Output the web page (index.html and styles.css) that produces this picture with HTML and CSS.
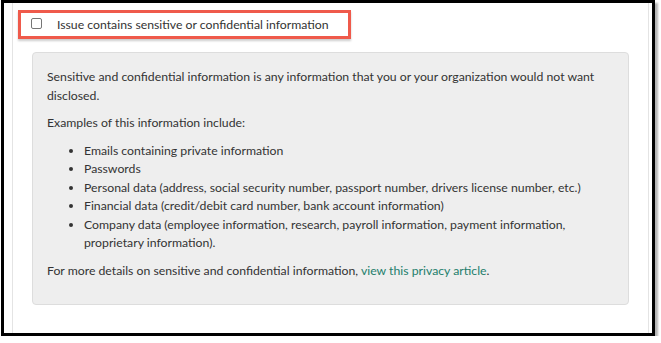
FILE: index.html
```html
<!DOCTYPE html>
<html lang="en">
<head>
<meta charset="utf-8">
<title>Sensitive information</title>
<link rel="stylesheet" href="styles.css">
</head>
<body>
<div class="frame">
  <div class="sheet">
    <label class="check-row">
      <span class="checkbox"></span>
      <span class="check-label">Issue contains sensitive or confidential information</span>
    </label>
    <div class="info-panel">
      <p>Sensitive and confidential information is any information that you or your organization would not want disclosed.</p>
      <p>Examples of this information include:</p>
      <ul>
        <li>Emails containing private information</li>
        <li>Passwords</li>
        <li>Personal data (address, social security number, passport number, drivers license number, etc.)</li>
        <li>Financial data (credit/debit card number, bank account information)</li>
        <li>Company data (employee information, research, payroll information, payment information, proprietary information).</li>
      </ul>
      <p>For more details on sensitive and confidential information, <a href="#">view this privacy article</a>.</p>
    </div>
  </div>
</div>
</body>
</html>
```
FILE: styles.css
```css
html, body {
  margin: 0;
  padding: 0;
  background: #ffffff;
}
body {
  font-family: Lato, "Noto Sans", sans-serif;
  font-size: 12.25px;
  color: #333333;
}
.frame {
  margin-left: 1px;
  width: 648px;
  height: 330px;
  border: 3px solid #000000;
  background: #ffffff;
  box-shadow: 3px 3px 2px rgba(0, 0, 0, 0.3);
  display: flex;
}
.sheet {
  flex: 1;
  margin: 0 3px 0 8px;
  border-left: 1px solid #e4e4e4;
  border-right: 1px solid #e4e4e4;
  padding-top: 7px;
}
.check-row {
  display: flex;
  align-items: center;
  box-sizing: border-box;
  width: 333px;
  height: 29px;
  margin-left: 5px;
  padding-left: 10px;
  border: 3px solid #ef5a4b;
  box-shadow: 0 2px 2px rgba(0, 0, 0, 0.2);
}
.checkbox {
  box-sizing: border-box;
  width: 11px;
  height: 11px;
  border: 1px solid #767676;
  border-radius: 2px;
  background: #ffffff;
  margin-top: -2px;
}
.check-label {
  margin-left: 15px;
  line-height: 18px;
}
.info-panel {
  margin: 13px 19px 0 19px;
  padding: 15px 14px 15px 14px;
  background: #eeeeee;
  border: 1px solid #dddddd;
  border-radius: 4px;
  line-height: 18.5px;
}
.info-panel p {
  margin: 0 0 9px 0;
}
.info-panel ul {
  margin: 0 0 9px 0;
  padding-left: 37px;
}
.info-panel a {
  color: #1d7e6c;
  text-decoration: none;
}
```
